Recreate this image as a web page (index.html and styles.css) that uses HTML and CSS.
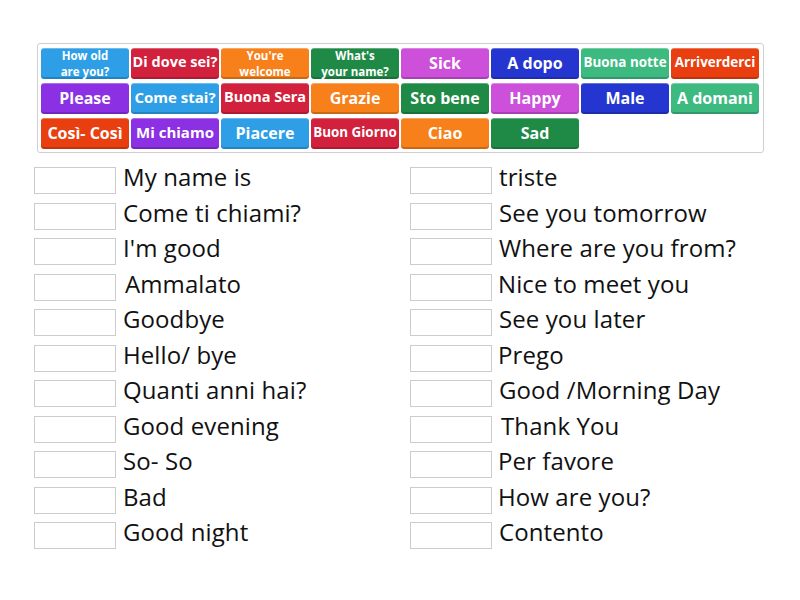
FILE: index.html
```html
<!DOCTYPE html>
<html>
<head>
<meta charset="utf-8">
<link rel="stylesheet" href="styles.css">
</head>
<body>
<div class="page">
  <div class="bank">
    <div class="tile blue two">How old<br>are you?</div>
    <div class="tile red fs14">Di dove sei?</div>
    <div class="tile orange two">You're<br>welcome</div>
    <div class="tile green two">What's<br>your name?</div>
    <div class="tile magenta">Sick</div>
    <div class="tile navy">A dopo</div>
    <div class="tile teal fs13">Buona notte</div>
    <div class="tile orred fs13">Arriverderci</div>

    <div class="tile purple">Please</div>
    <div class="tile blue fs15">Come stai?</div>
    <div class="tile red fs14">Buona Sera</div>
    <div class="tile orange">Grazie</div>
    <div class="tile green">Sto bene</div>
    <div class="tile magenta">Happy</div>
    <div class="tile navy">Male</div>
    <div class="tile teal">A domani</div>

    <div class="tile orred">Così- Così</div>
    <div class="tile purple fs15">Mi chiamo</div>
    <div class="tile blue">Piacere</div>
    <div class="tile red fs13">Buon Giorno</div>
    <div class="tile orange">Ciao</div>
    <div class="tile green">Sad</div>
  </div>

  <div class="answers">
    <div class="col">
      <div class="row"><span class="box"></span><span class="label">My name is</span></div>
      <div class="row"><span class="box"></span><span class="label">Come ti chiami?</span></div>
      <div class="row"><span class="box"></span><span class="label">I'm good</span></div>
      <div class="row"><span class="box"></span><span class="label nudge">Ammalato</span></div>
      <div class="row"><span class="box"></span><span class="label">Goodbye</span></div>
      <div class="row"><span class="box"></span><span class="label">Hello/ bye</span></div>
      <div class="row"><span class="box"></span><span class="label">Quanti anni hai?</span></div>
      <div class="row"><span class="box"></span><span class="label">Good evening</span></div>
      <div class="row"><span class="box"></span><span class="label">So- So</span></div>
      <div class="row"><span class="box"></span><span class="label">Bad</span></div>
      <div class="row"><span class="box"></span><span class="label">Good night</span></div>
    </div>
    <div class="col">
      <div class="row"><span class="box"></span><span class="label">triste</span></div>
      <div class="row"><span class="box"></span><span class="label">See you tomorrow</span></div>
      <div class="row"><span class="box"></span><span class="label">Where are you from?</span></div>
      <div class="row"><span class="box"></span><span class="label back">Nice to meet you</span></div>
      <div class="row"><span class="box"></span><span class="label">See you later</span></div>
      <div class="row"><span class="box"></span><span class="label back">Prego</span></div>
      <div class="row"><span class="box"></span><span class="label">Good /Morning Day</span></div>
      <div class="row"><span class="box"></span><span class="label nudge">Thank You</span></div>
      <div class="row"><span class="box"></span><span class="label back">Per favore</span></div>
      <div class="row"><span class="box"></span><span class="label back">How are you?</span></div>
      <div class="row"><span class="box"></span><span class="label">Contento</span></div>
    </div>
  </div>
</div>
</body>
</html>
```

FILE: styles.css
```css
html, body {
  margin: 0;
  padding: 0;
  background: #ffffff;
}

body {
  font-family: "Open Sans", "DejaVu Sans", sans-serif;
  color: #111111;
}

.page {
  padding: 43px 0 0 34px;
}

.bank {
  margin-left: 3px;
  width: 719px;
  border: 1px solid #cfcfcf;
  border-radius: 3px;
  padding: 4px 3px 3px 3px;
  display: grid;
  grid-template-columns: repeat(8, 88px);
  grid-auto-rows: 31px;
  column-gap: 2px;
  row-gap: 4px;
}

.tile {
  display: flex;
  align-items: center;
  justify-content: center;
  text-align: center;
  color: #ffffff;
  font-weight: 700;
  font-size: 16px;
  line-height: 1;
  border-radius: 3px;
  white-space: nowrap;
  box-sizing: border-box;
  padding-bottom: 3px;
  border-top: 1px solid rgba(255, 255, 255, 0.3);
  box-shadow: inset 0 -2px 0 rgba(0, 0, 0, 0.18);
}

.tile.fs15 { font-size: 15px; }
.tile.fs14 { font-size: 14.5px; }
.tile.fs13 { font-size: 13.4px; }
.tile.two { font-size: 11.5px; line-height: 15.6px; padding-bottom: 1px; }

.blue    { background: #2e9fe6; }
.red     { background: #d2213c; }
.orange  { background: #f7801a; }
.green   { background: #1f8a46; }
.magenta { background: #cc50d9; }
.navy    { background: #2436cf; }
.teal    { background: #3dba80; }
.orred   { background: #e93f10; }
.purple  { background: #8b30e3; }

.answers {
  display: flex;
  margin-top: 14px;
}

.col {
  width: 376px;
  display: flex;
  flex-direction: column;
}

.row {
  height: 35.5px;
  display: flex;
  align-items: flex-start;
}

.box {
  width: 80px;
  height: 25px;
  border: 1px solid #cccccc;
  flex: none;
}

.label {
  margin-left: 7px;
  font-size: 24px;
  line-height: 24px;
  margin-top: -2px;
  color: #111111;
  letter-spacing: 0.1px;
}

.label.nudge { margin-left: 9px; }
.label.back { margin-left: 6px; }
```
